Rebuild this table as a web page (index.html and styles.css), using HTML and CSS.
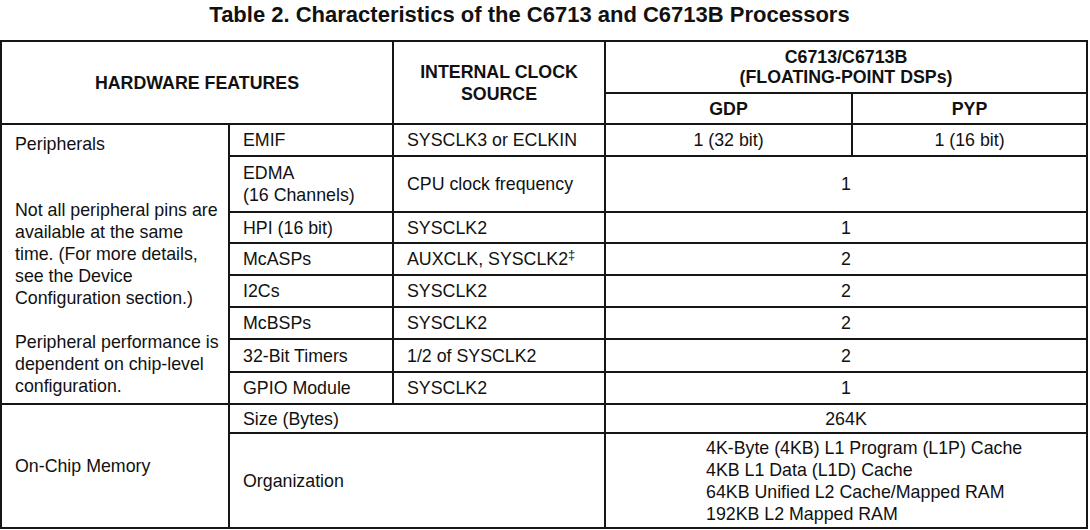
FILE: index.html
```html
<!DOCTYPE html>
<html>
<head>
<meta charset="utf-8">
<link rel="stylesheet" href="styles.css">
</head>
<body>
<div class="page">
  <h1 class="title">Table 2. Characteristics of the C6713 and C6713B Processors</h1>
  <table class="spec">
    <colgroup>
      <col class="c1"><col class="c2"><col class="c3"><col class="c4"><col class="c5">
    </colgroup>
    <thead>
      <tr class="h1">
        <th colspan="2" rowspan="2">HARDWARE FEATURES</th>
        <th rowspan="2">INTERNAL CLOCK<br>SOURCE</th>
        <th colspan="2" class="dsp">C6713/C6713B<br>(FLOATING-POINT DSPs)</th>
      </tr>
      <tr class="h2">
        <th>GDP</th>
        <th>PYP</th>
      </tr>
    </thead>
    <tbody>
      <tr class="r-emif">
        <td rowspan="8" class="group">
          <p class="note first">Peripherals</p>
          <p class="note gap2">Not all peripheral pins are available at the same time. (For more details, see the Device Configuration section.)</p>
          <p class="note gap1">Peripheral performance is dependent on chip-level configuration.</p>
        </td>
        <td>EMIF</td>
        <td>SYSCLK3 or ECLKIN</td>
        <td class="val">1 (32 bit)</td>
        <td class="val">1 (16 bit)</td>
      </tr>
      <tr class="r-edma">
        <td>EDMA<br>(16 Channels)</td>
        <td>CPU clock frequency</td>
        <td colspan="2" class="val">1</td>
      </tr>
      <tr class="r-hpi">
        <td>HPI (16 bit)</td>
        <td>SYSCLK2</td>
        <td colspan="2" class="val">1</td>
      </tr>
      <tr class="r-mcasp">
        <td>McASPs</td>
        <td>AUXCLK, SYSCLK2<sup class="dag">‡</sup></td>
        <td colspan="2" class="val">2</td>
      </tr>
      <tr class="r-i2c">
        <td>I2Cs</td>
        <td>SYSCLK2</td>
        <td colspan="2" class="val">2</td>
      </tr>
      <tr class="r-mcbsp">
        <td>McBSPs</td>
        <td>SYSCLK2</td>
        <td colspan="2" class="val">2</td>
      </tr>
      <tr class="r-timer">
        <td>32-Bit Timers</td>
        <td>1/2 of SYSCLK2</td>
        <td colspan="2" class="val">2</td>
      </tr>
      <tr class="r-gpio">
        <td>GPIO Module</td>
        <td>SYSCLK2</td>
        <td colspan="2" class="val">1</td>
      </tr>
      <tr class="r-size">
        <td rowspan="2" class="group mid">On-Chip Memory</td>
        <td colspan="2">Size (Bytes)</td>
        <td colspan="2" class="val">264K</td>
      </tr>
      <tr class="r-org">
        <td colspan="2">Organization</td>
        <td colspan="2" class="org">
          <div class="orglist">
            <div>4K-Byte (4KB) L1 Program (L1P) Cache</div>
            <div>4KB L1 Data (L1D) Cache</div>
            <div>64KB Unified L2 Cache/Mapped RAM</div>
            <div>192KB L2 Mapped RAM</div>
          </div>
        </td>
      </tr>
    </tbody>
  </table>
</div>
</body>
</html>
```

FILE: styles.css
```css
html, body {
  margin: 0;
  padding: 0;
  background: #ffffff;
}
.page {
  width: 1090px;
  font-family: "Liberation Sans", Arial, Helvetica, sans-serif;
  color: #111;
}
.title {
  margin: 0;
  height: 40px;
  padding: 2px 31px 0 0;
  box-sizing: border-box;
  font-size: 22px;
  line-height: 26px;
  font-weight: bold;
  text-align: center;
  color: #111;
}
.spec {
  border-collapse: collapse;
  table-layout: fixed;
  width: 1088px;
  font-size: 17.8px;
  line-height: 22px;
}
.c1 { width: 228px; }
.c2 { width: 164px; }
.c3 { width: 212px; }
.c4 { width: 247px; }
.c5 { width: 235px; }
.spec th, .spec td {
  border: 2px solid #161616;
  padding: 0 0 0 13px;
  vertical-align: middle;
  text-align: left;
}
.spec th {
  font-weight: bold;
  text-align: center;
  padding: 0;
  line-height: 22px;
}
.spec th.dsp { line-height: 20px; }
.h1 { height: 52px; }
.h2 { height: 31px; }
.r-emif { height: 32px; }
.r-edma { height: 56px; }
.r-hpi { height: 31px; }
.r-mcasp { height: 32px; }
.r-i2c { height: 32px; }
.r-mcbsp { height: 32px; }
.r-timer { height: 33px; }
.r-gpio { height: 32px; }
.r-size { height: 29px; }
.r-org { height: 95px; }
.spec td.val {
  text-align: center;
  padding: 0;
}
.spec td.group {
  vertical-align: top;
  padding: 8px 8px 0 13px;
}
.spec td.group.mid {
  vertical-align: middle;
  padding-top: 0;
}
.note { margin: 0; }
.note.first { padding-top: 0; }
.note.gap2 { margin-top: 44px; }
.note.gap1 { margin-top: 22px; }
.dag {
  font-size: 13px;
  line-height: 0;
  vertical-align: 6px;
}
.spec td.org {
  padding: 0 0 0 100px;
}
.orglist {
  display: flex;
  flex-direction: column;
}
```
